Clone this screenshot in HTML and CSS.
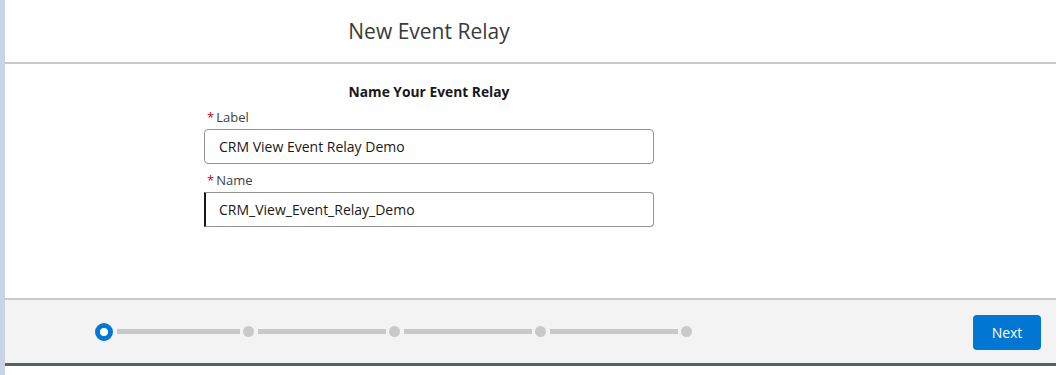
FILE: index.html
```html
<!DOCTYPE html>
<html lang="en">
<head>
    <meta charset="UTF-8">
    <meta name="viewport" content="width=device-width, initial-scale=1.0">
    <title>New Event Relay</title>
    <link rel="stylesheet" href="styles.css">
</head>
<body>

<div class="rail"></div>

<div class="modal">
    <div class="modal-header">
        <h2>New Event Relay</h2>
    </div>

    <div class="modal-body">
        <div class="form">
            <h3>Name Your Event Relay</h3>

            <div class="form-group">
                <label for="label"><abbr>*</abbr>Label</label>
                <input type="text" id="label" value="CRM View Event Relay Demo">
            </div>

            <div class="form-group">
                <label for="name"><abbr>*</abbr>Name</label>
                <input type="text" id="name" class="active" value="CRM_View_Event_Relay_Demo">
            </div>
        </div>
    </div>

    <div class="modal-footer">
        <div class="progress">
            <span class="step current"></span>
            <span class="bar first"></span>
            <span class="step"></span>
            <span class="bar"></span>
            <span class="step"></span>
            <span class="bar"></span>
            <span class="step"></span>
            <span class="bar"></span>
            <span class="step"></span>
        </div>
        <button>Next</button>
    </div>
</div>

</body>
</html>
```

FILE: styles.css
```css
body {
    font-family: "Open Sans", Arial, sans-serif;
    margin: 0;
    padding: 0;
    background-color: #fff;
    color: #181818;
    display: flex;
    height: 375px;
    overflow: hidden;
}
.rail {
    width: 5px;
    flex: none;
    background-color: #c9d3e5;
}
.modal {
    width: 1051px;
    display: flex;
    flex-direction: column;
    align-self: flex-start;
}
.modal-header {
    height: 62px;
    border-bottom: 2px solid #c9c9c9;
    padding-left: 199px;
}
.modal-header h2 {
    width: 450px;
    margin: 0;
    text-align: center;
    font-size: 21px;
    font-weight: 400;
    line-height: 62px;
    color: #3a3a3a;
}
.modal-body {
    height: 234px;
    padding-left: 199px;
}
.form {
    width: 450px;
    padding-top: 18px;
}
.form h3 {
    margin: 0 0 6px;
    text-align: center;
    font-size: 13.8px;
    font-weight: 700;
    line-height: 20px;
    color: #181818;
}
.form-group {
    margin-bottom: 7px;
}
.form-group label {
    display: block;
    padding-left: 3px;
    margin-bottom: 3px;
    font-size: 13px;
    line-height: 18px;
    color: #3e3e3c;
}
.form-group abbr {
    color: #ba0517;
    margin-right: 2px;
    text-decoration: none;
}
.form-group input {
    display: block;
    box-sizing: border-box;
    width: 450px;
    height: 35px;
    padding: 0 14px;
    font-family: inherit;
    font-size: 14px;
    color: #181818;
    border: 1px solid #939393;
    border-radius: 4px;
    background-color: #fff;
}
.form-group input.active {
    border-left: 2px solid #181818;
    padding-left: 13px;
    border-radius: 0 4px 4px 0;
}
.modal-footer {
    height: 63px;
    border-top: 2px solid #c9c9c9;
    border-bottom: 3px solid #58606c;
    background-color: #f3f3f3;
    display: flex;
    align-items: center;
    justify-content: space-between;
    padding: 0 15px 0 90px;
}
.progress {
    display: flex;
    align-items: center;
    gap: 3.5px;
}
.step {
    width: 11px;
    height: 11px;
    border-radius: 50%;
    background-color: #c9c9c9;
}
.step.current {
    box-sizing: border-box;
    width: 18px;
    height: 18px;
    border: 5px solid #0176d3;
    background-color: #fff;
}
.bar {
    width: 128px;
    height: 5px;
    background-color: #c9c9c9;
}
.bar.first {
    width: 123px;
}
.modal-footer button {
    width: 68px;
    height: 35px;
    margin-top: 1px;
    font-family: inherit;
    font-size: 14px;
    color: #fff;
    background-color: #0176d3;
    border: none;
    border-radius: 4px;
    cursor: pointer;
}
```
